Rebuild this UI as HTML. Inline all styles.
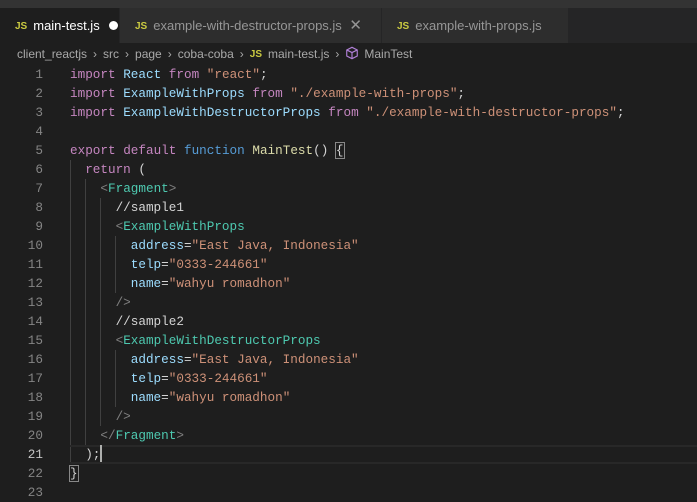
<!DOCTYPE html><html><head><style>
*{margin:0;padding:0;box-sizing:border-box}
body{width:697px;height:501px;background:#1e1e1e;overflow:hidden;position:relative;font-family:"Liberation Sans",sans-serif}
.top{position:absolute;left:0;top:0;width:697px;height:8px;background:#333333}
.tabs{position:absolute;left:0;top:8px;width:697px;height:35px;background:#252526}
.tab{position:absolute;top:0;height:35px;background:#2d2d2d;color:#969696;font-size:13px;line-height:35px;padding-left:15px;white-space:nowrap}
.tab.a{background:#1e1e1e;color:#fff}
.js{color:#cbcb41;font-weight:bold;font-size:10px;margin-right:6px;vertical-align:1px}
.bc{position:absolute;left:17px;top:43px;height:22px;line-height:22px;font-size:12px;color:#a9a9a9;white-space:nowrap}
.bc .s{margin:0 6px;color:#a9a9a9}
.code{position:absolute;left:0;top:65px;font-family:"Liberation Mono",monospace;font-size:12.67px}
.l{position:absolute;left:0;height:19px;line-height:19px;white-space:pre;width:697px}
.n{position:absolute;left:0;width:43px;text-align:right;color:#858585}
.t{position:absolute;left:70px;color:#d4d4d4}
.k{color:#c586c0}.v{color:#9cdcfe}.s1{color:#ce9178}.b{color:#569cd6}.f{color:#dcdcaa}.g{color:#808080}.c{color:#4ec9b0}
.gd{position:absolute;width:1px;background:#404040}
</style></head><body>
<div class="top"></div>
<div class="tabs">
<div class="tab a" style="left:0;width:119px"><span class="js">JS</span>main-test.js <span style="display:inline-block;width:9px;height:9px;border-radius:50%;background:#fff;margin-left:6px;vertical-align:0"></span></div>
<div class="tab" style="left:120px;width:261px"><span class="js">JS</span>example-with-destructor-props.js <span style="margin-left:4px;font-size:15px">✕</span></div>
<div class="tab" style="left:382px;width:186px"><span class="js">JS</span>example-with-props.js</div>
</div>
<div class="bc">client_reactjs<span class="s">›</span>src<span class="s">›</span>page<span class="s">›</span>coba-coba<span class="s">›</span><span class="js">JS</span>main-test.js<span class="s">›</span><svg width="14" height="14" viewBox="0 0 16 16" style="vertical-align:-2px;margin-right:5px"><path d="M8 1.5L14 4.5V11.5L8 14.5L2 11.5V4.5Z M2 4.5L8 7.5L14 4.5 M8 7.5V14.5" fill="none" stroke="#b180d7" stroke-width="1.3"/></svg>MainTest</div>
<div class="code">
<div class="gd" style="left:70px;top:95px;height:304px"></div>
<div class="gd" style="left:85px;top:114px;height:266px"></div>
<div class="gd" style="left:100px;top:133px;height:228px"></div>
<div class="gd" style="left:115px;top:171px;height:57px"></div>
<div class="gd" style="left:115px;top:285px;height:57px"></div>
<div class="l" style="top:0"><span class="n">1</span><span class="t"><span class="k">import</span> <span class="v">React</span> <span class="k">from</span> <span class="s1">"react"</span>;</span></div>
<div class="l" style="top:19px"><span class="n">2</span><span class="t"><span class="k">import</span> <span class="v">ExampleWithProps</span> <span class="k">from</span> <span class="s1">"./example-with-props"</span>;</span></div>
<div class="l" style="top:38px"><span class="n">3</span><span class="t"><span class="k">import</span> <span class="v">ExampleWithDestructorProps</span> <span class="k">from</span> <span class="s1">"./example-with-destructor-props"</span>;</span></div>
<div class="l" style="top:57px"><span class="n">4</span></div>
<div class="l" style="top:76px"><span class="n">5</span><span class="t"><span class="k">export</span> <span class="k">default</span> <span class="b">function</span> <span class="f">MainTest</span>() <span style="outline:1px solid #888">{</span></span></div>
<div class="l" style="top:95px"><span class="n">6</span><span class="t">  <span class="k">return</span> (</span></div>
<div class="l" style="top:114px"><span class="n">7</span><span class="t">    <span class="g">&lt;</span><span class="c">Fragment</span><span class="g">&gt;</span></span></div>
<div class="l" style="top:133px"><span class="n">8</span><span class="t">      //sample1</span></div>
<div class="l" style="top:152px"><span class="n">9</span><span class="t">      <span class="g">&lt;</span><span class="c">ExampleWithProps</span></span></div>
<div class="l" style="top:171px"><span class="n">10</span><span class="t">        <span class="v">address</span>=<span class="s1">"East Java, Indonesia"</span></span></div>
<div class="l" style="top:190px"><span class="n">11</span><span class="t">        <span class="v">telp</span>=<span class="s1">"0333-244661"</span></span></div>
<div class="l" style="top:209px"><span class="n">12</span><span class="t">        <span class="v">name</span>=<span class="s1">"wahyu romadhon"</span></span></div>
<div class="l" style="top:228px"><span class="n">13</span><span class="t">      <span class="g">/&gt;</span></span></div>
<div class="l" style="top:247px"><span class="n">14</span><span class="t">      //sample2</span></div>
<div class="l" style="top:266px"><span class="n">15</span><span class="t">      <span class="g">&lt;</span><span class="c">ExampleWithDestructorProps</span></span></div>
<div class="l" style="top:285px"><span class="n">16</span><span class="t">        <span class="v">address</span>=<span class="s1">"East Java, Indonesia"</span></span></div>
<div class="l" style="top:304px"><span class="n">17</span><span class="t">        <span class="v">telp</span>=<span class="s1">"0333-244661"</span></span></div>
<div class="l" style="top:323px"><span class="n">18</span><span class="t">        <span class="v">name</span>=<span class="s1">"wahyu romadhon"</span></span></div>
<div class="l" style="top:342px"><span class="n">19</span><span class="t">      <span class="g">/&gt;</span></span></div>
<div class="l" style="top:361px"><span class="n">20</span><span class="t">    <span class="g">&lt;/</span><span class="c">Fragment</span><span class="g">&gt;</span></span></div>
<div class="l" style="top:380px;border-top:2px solid #282828;border-bottom:2px solid #282828;left:70px;width:627px;height:19px"></div>
<div class="l" style="top:380px"><span class="n" style="color:#c6c6c6">21</span><span class="t">  );<span style="display:inline-block;width:2px;height:17px;background:#aeafad;vertical-align:-4px"></span></span></div>
<div class="l" style="top:399px"><span class="n">22</span><span class="t"><span style="outline:1px solid #888">}</span></span></div>
<div class="l" style="top:418px"><span class="n">23</span></div>
</div>
</body></html>
